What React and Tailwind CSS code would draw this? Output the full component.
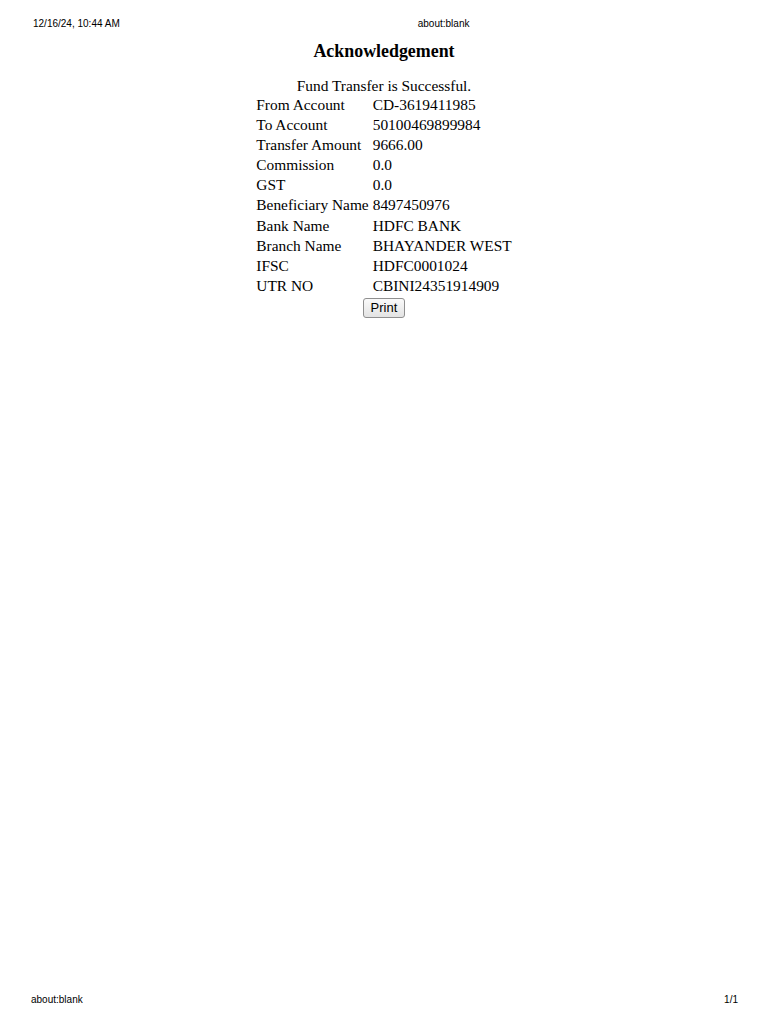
const rows = [
  ['From Account', 'CD-3619411985'],
  ['To Account', '50100469899984'],
  ['Transfer Amount', '9666.00'],
  ['Commission', '0.0'],
  ['GST', '0.0'],
  ['Beneficiary Name', '8497450976'],
  ['Bank Name', 'HDFC BANK'],
  ['Branch Name', 'BHAYANDER WEST'],
  ['IFSC', 'HDFC0001024'],
  ['UTR NO', 'CBINI24351914909'],
]

export default function App() {
  return (
    <div className="flex h-[1024px] w-[768px] flex-col bg-white text-black">
      {/* print header */}
      <div className="flex items-center pt-[18px] font-['Liberation_Sans',Arial,sans-serif] text-[10px] leading-[12px]">
        <span className="pl-[33px]">12/16/24, 10:44 AM</span>
        <span className="ml-[298px]">about:blank</span>
      </div>

      <div className="font-['Liberation_Serif','Times_New_Roman',serif]">
        <h3 className="mt-[10px] text-center text-[17.9px] font-bold leading-[22px]">Acknowledgement</h3>

        <div className="mx-auto mt-[14px] w-max text-[15.4px] leading-[20.1px]">
          <div className="text-center leading-[19px]">Fund Transfer is Successful.</div>
          <div className="grid grid-cols-[auto_auto] gap-x-[4px]">
            {rows.map(([k, v]) => (
              <div key={k} className="contents">
                <div>{k}</div>
                <div>{v}</div>
              </div>
            ))}
          </div>
          <div className="mt-[2px] flex justify-center">
            <button className="h-[20px] w-[42px] rounded-[3px] border border-[#8f8f8f] bg-gradient-to-b from-[#fafafa] to-[#e3e3e3] font-['Liberation_Sans',Arial,sans-serif] text-[13px] leading-[18px]">
              Print
            </button>
          </div>
        </div>
      </div>

      <div className="flex-1" />

      {/* print footer */}
      <div className="flex items-center justify-between pb-[18px] pl-[31px] pr-[30px] font-['Liberation_Sans',Arial,sans-serif] text-[10px] leading-[12px]">
        <span>about:blank</span>
        <span>1/1</span>
      </div>
    </div>
  )
}
